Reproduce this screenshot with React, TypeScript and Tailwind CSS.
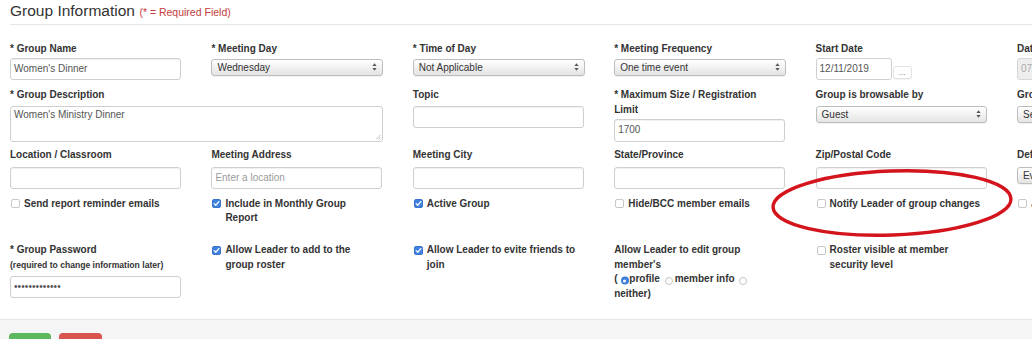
import React from "react";

function Label({ children, extra = "" }: { children: React.ReactNode; extra?: string }) {
  return (
    <div className={"w-[165px] text-[10px] leading-[14.5px] font-bold text-[#333] " + extra}>{children}</div>
  );
}

function TextBox({ value, placeholder, h = "h-[22px]" }: { value?: string; placeholder?: string; h?: string }) {
  return (
    <div
      className={
        "w-[171px] rounded-[3px] border border-[#cfcfcf] bg-white pl-[3px] text-[10px] leading-[20px] text-[#555] shadow-[inset_0_1px_1px_rgba(0,0,0,0.06)] " +
        h
      }
    >
      {value ? value : <span className="text-[#9a9a9a]">{placeholder}</span>}
    </div>
  );
}

function Arrows() {
  return (
    <svg className="absolute right-[5px] top-[3.5px]" width="5" height="8" viewBox="0 0 5 8">
      <path d="M2.5 0.3L4.6 3.1H0.4Z M2.5 7.7L0.4 4.9H4.6Z" fill="#555" />
    </svg>
  );
}

function Select({ value, w = "w-[172px]" }: { value: string; w?: string }) {
  return (
    <div
      className={
        "relative h-[17px] rounded-[3px] border border-[#bdbdbd] bg-linear-to-b from-[#ffffff] to-[#e4e4e4] pl-[5px] text-[10px] leading-[15px] text-[#333] shadow-[0_1px_1px_rgba(0,0,0,0.06)] " +
        w
      }
    >
      {value}
      <Arrows />
    </div>
  );
}

function Check({ checked, children }: { checked?: boolean; children: React.ReactNode }) {
  return (
    <div className="flex items-start">
      {checked ? (
        <div className="ml-[1px] mt-[2.5px] flex h-[9px] w-[9px] shrink-0 items-center justify-center rounded-[2px] border border-[#3a74cc] bg-[#3f82e0]">
          <svg width="7" height="7" viewBox="0 0 7 7">
            <path d="M1.2 3.6L2.8 5.2L5.9 1.6" stroke="#fff" strokeWidth="1.3" fill="none" strokeLinecap="round" strokeLinejoin="round" />
          </svg>
        </div>
      ) : (
        <div className="ml-[1px] mt-[2.5px] h-[9px] w-[9px] shrink-0 rounded-[2px] border border-[#c8c8c8] bg-white" />
      )}
      <div className="ml-[4px] w-[153px] text-[10px] leading-[14.5px] font-bold text-[#333]">{children}</div>
    </div>
  );
}

function Radio({ checked }: { checked?: boolean }) {
  return checked ? (
    <span className="mx-[0.5px] inline-flex h-[8px] w-[8px] translate-y-[1.5px] items-center justify-center rounded-full bg-[#3d7edb] align-middle">
      <span className="h-[3px] w-[3px] rounded-full bg-white" />
    </span>
  ) : (
    <span className="mx-[2px] inline-block h-[8px] w-[8px] translate-y-[2px] rounded-full border border-[#c4c4c4] bg-white align-middle" />
  );
}

const Cell = ({ children, wide }: { children: React.ReactNode; wide?: boolean }) => (
  <div className={wide ? "w-[402.8px] shrink-0" : "w-[201.4px] shrink-0"}>{children}</div>
);

export default function App() {
  return (
    <div className="relative h-[339px] w-[1032px] overflow-hidden bg-white font-['Liberation_Sans',Arial,Helvetica,sans-serif]">
      <div className="h-[319px]">
        <div className="ml-[10px] h-[25px] border-b border-[#e6e6e6] pt-[2px] leading-[18px] whitespace-nowrap">
          <span className="text-[15.5px] text-[#333]">Group Information</span>{" "}
          <span className="text-[10.5px] text-[#c43b3b]">(* = Required Field)</span>
        </div>

        <div className="pl-[10px]">
          {/* Row 1 */}
          <div className="mt-[16.5px] flex">
            <Cell>
              <Label>* Group Name</Label>
              <div className="mt-[2px]">
                <TextBox value="Women's Dinner" />
              </div>
            </Cell>
            <Cell>
              <Label>* Meeting Day</Label>
              <div className="mt-[2.5px]">
                <Select value="Wednesday" />
              </div>
            </Cell>
            <Cell>
              <Label>* Time of Day</Label>
              <div className="mt-[2.5px]">
                <Select value="Not Applicable" />
              </div>
            </Cell>
            <Cell>
              <Label>* Meeting Frequency</Label>
              <div className="mt-[2.5px]">
                <Select value="One time event" />
              </div>
            </Cell>
            <Cell>
              <Label>Start Date</Label>
              <div className="mt-[2px] flex items-start">
                <div className="h-[22px] w-[76px] rounded-[3px] border border-[#cfcfcf] bg-white pl-[3px] text-[10px] leading-[20px] text-[#555]">
                  12/11/2019
                </div>
                <div className="ml-[1px] mt-[7.5px] flex h-[13px] w-[19px] items-center justify-center rounded-[3px] border border-[#e2e2e2] bg-white text-[8px] leading-[13px] text-[#666] shadow-[0_1px_1px_rgba(0,0,0,0.05)]">
                  ...
                </div>
              </div>
            </Cell>
            <Cell>
              <Label>Date Created</Label>
              <div className="mt-[2px] h-[22px] w-[171px] rounded-[3px] border border-[#d6d6d6] bg-[#eeeeee] pl-[3px] text-[10px] leading-[20px] text-[#aaa]">
                07/22/2019
              </div>
            </Cell>
          </div>

          {/* Row 2 */}
          <div className="mt-[8px] flex">
            <Cell wide>
              <Label>* Group Description</Label>
              <div className="relative mt-[3px] h-[36px] w-[373px] rounded-[3px] border border-[#cfcfcf] bg-white pl-[3px] pt-[1.5px] text-[10px] leading-[14px] text-[#555]">
                Women's Ministry Dinner
                <svg className="absolute bottom-[1px] right-[1px]" width="6" height="6" viewBox="0 0 6 6">
                  <path d="M5.5 1L1 5.5 M5.5 3.5L3.5 5.5" stroke="#aaa" strokeWidth="0.8" />
                </svg>
              </div>
            </Cell>
            <Cell>
              <Label>Topic</Label>
              <div className="mt-[3px]">
                <TextBox />
              </div>
            </Cell>
            <Cell>
              <Label>* Maximum Size / Registration Limit</Label>
              <div className="mt-[1.5px]">
                <TextBox value="1700" h="h-[23px]" />
              </div>
            </Cell>
            <Cell>
              <Label>Group is browsable by</Label>
              <div className="mt-[3px]">
                <Select value="Guest" w="w-[171px]" />
              </div>
            </Cell>
            <Cell>
              <Label>Group Type</Label>
              <div className="mt-[3px]">
                <Select value="Select..." w="w-[171px]" />
              </div>
            </Cell>
          </div>

          {/* Row 3 */}
          <div className="mt-[6.5px] flex">
            <Cell>
              <Label>Location / Classroom</Label>
              <div className="mt-[4px]">
                <TextBox />
              </div>
            </Cell>
            <Cell>
              <Label>Meeting Address</Label>
              <div className="mt-[4px]">
                <TextBox placeholder="Enter a location" />
              </div>
            </Cell>
            <Cell>
              <Label>Meeting City</Label>
              <div className="mt-[4px]">
                <TextBox />
              </div>
            </Cell>
            <Cell>
              <Label>State/Province</Label>
              <div className="mt-[4px]">
                <TextBox />
              </div>
            </Cell>
            <Cell>
              <Label>Zip/Postal Code</Label>
              <div className="mt-[4px]">
                <TextBox />
              </div>
            </Cell>
            <Cell>
              <Label>Default Role</Label>
              <div className="mt-[4px]">
                <Select value="Everyone" w="w-[171px]" />
              </div>
            </Cell>
          </div>

          {/* Row 4 */}
          <div className="mt-[8px] flex h-[29px]">
            <Cell>
              <Check>Send report reminder emails</Check>
            </Cell>
            <Cell>
              <Check checked>Include in Monthly Group Report</Check>
            </Cell>
            <Cell>
              <Check checked>Active Group</Check>
            </Cell>
            <Cell>
              <Check>Hide/BCC member emails</Check>
            </Cell>
            <Cell>
              <Check>Notify Leader of group changes</Check>
            </Cell>
            <Cell>
              <Check>Join requests require approval</Check>
            </Cell>
          </div>

          {/* Row 5 */}
          <div className="mt-[17.5px] flex">
            <Cell>
              <Label>* Group Password</Label>
              <div className="text-[8.6px] leading-[14.5px] font-bold text-[#333] whitespace-nowrap">
                (required to change information later)
              </div>
              <div className="mt-[4px] h-[22px] w-[171px] rounded-[3px] border border-[#cfcfcf] bg-white pl-[3px] text-[10px] leading-[20px] tracking-[0.1px] text-[#555]">
                •••••••••••••
              </div>
            </Cell>
            <Cell>
              <Check checked>Allow Leader to add to the group roster</Check>
            </Cell>
            <Cell>
              <Check checked>Allow Leader to evite friends to join</Check>
            </Cell>
            <Cell>
              <div className="w-[162px] text-[10px] leading-[14.5px] font-bold text-[#333]">
                <div>Allow Leader to edit group member's</div>
                <div>
                  ( <Radio checked />profile <Radio />member info <Radio /> neither)
                </div>
              </div>
            </Cell>
            <Cell>
              <Check>Roster visible at member security level</Check>
            </Cell>
          </div>
        </div>
      </div>

      <div className="flex h-[20px] gap-[8px] border-t border-[#e6e6e6] bg-[#f5f5f5] pl-[9px] pt-[13px]">
        <div className="h-[20px] w-[42px] rounded-t-[4px] bg-[#5cb85c]" />
        <div className="h-[20px] w-[43px] rounded-t-[4px] bg-[#d9534f]" />
      </div>

      <svg className="pointer-events-none absolute left-[768px] top-[165px]" width="250" height="76" viewBox="0 0 250 76">
        <ellipse cx="124" cy="38" rx="119" ry="32" transform="rotate(-2 124 38)" fill="none" stroke="#d4141c" strokeWidth="3.4" />
      </svg>
    </div>
  );
}
